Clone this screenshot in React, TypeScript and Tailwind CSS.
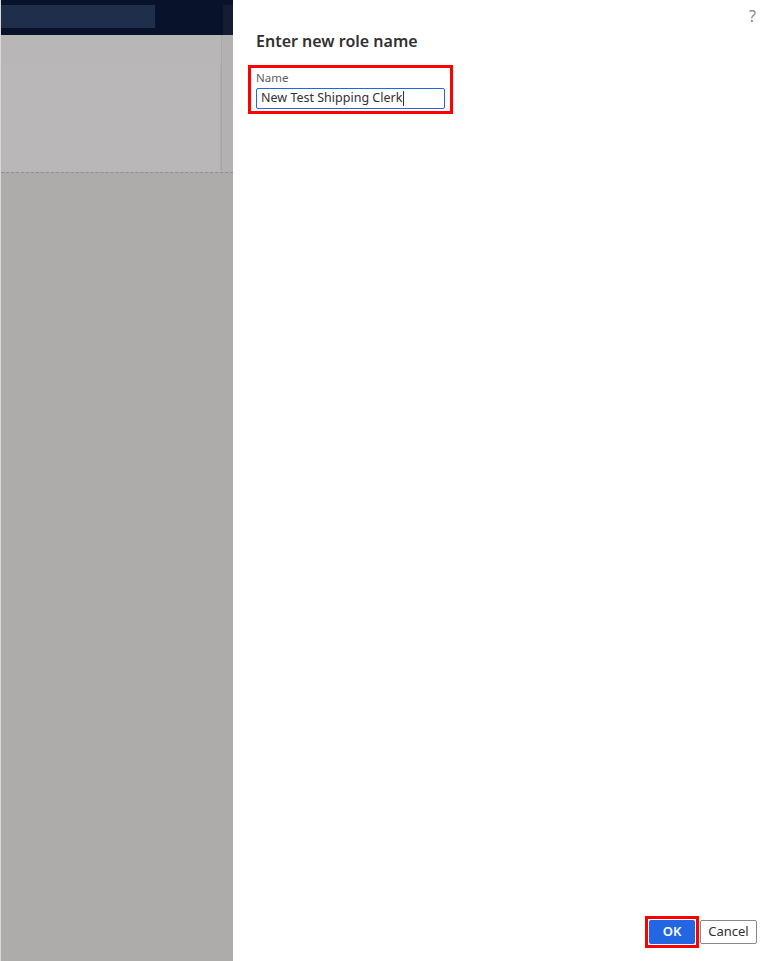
import React from 'react';

export default function App() {
  return (
    <div className="flex h-[961px] w-[768px] overflow-hidden bg-white font-['Noto_Sans',sans-serif] text-[#323130]">
      {/* dimmed page behind the dialog */}
      <aside className="flex w-[233px] shrink-0 flex-col border-l border-[#d8d8d8] bg-[#adacaa]">
        <div className="flex h-[35px] items-start bg-[#08132b] pt-[5px]">
          <div className="h-[23px] w-[154px] bg-[#1f2e4b]" />
          <div className="ml-auto h-full w-[10px] bg-[#141d31]" />
        </div>
        <div className="flex h-[137px] bg-[#b8b6b6]">
          <div className="mt-[30px] mb-[2px] flex-1 border-r border-[#aeacac] bg-[#b9b7b7]" />
          <div className="w-[12px] border-l border-[#a8a6a6] bg-[#b3b1b1]" />
        </div>
        <div className="border-t border-dashed border-[#8f8e8c]" />
        <div className="flex-1" />
      </aside>

      {/* dialog */}
      <section className="relative flex flex-1 flex-col">
        <span className="absolute right-[12px] top-[4px] text-[16px] text-[#8a8886]">?</span>
        <h1 className="mt-[29px] ml-[23px] text-[16px] font-semibold leading-[24px] text-[#323130]">
          Enter new role name
        </h1>
        <div className="mt-[12px] ml-[15px] w-[205px] border-[3px] border-[#ff0000] px-[5px] pt-[2px] pb-[2px]">
          <label className="block text-[11.5px] leading-[16px] text-[#605e5c]">Name</label>
          <div className="mt-[2px] flex h-[21px] w-[189px] items-center rounded-[2px] border border-[#2266e3] px-[4px] text-[12.5px] text-[#323130]">
            New Test Shipping Clerk
            <span className="ml-[1px] h-[15px] w-px bg-[#323130]" />
          </div>
        </div>
        <div className="flex-1" />
        <div className="mb-[13px] mr-[11px] flex items-center justify-end gap-[1px]">
          <div className="border-[3px] border-[#ff0000] p-[1px]">
            <button className="flex h-[24px] w-[46px] items-center justify-center rounded-[2px] bg-[#2266e3] text-[13px] font-semibold text-white">
              OK
            </button>
          </div>
          <button className="flex h-[24px] w-[57px] items-center justify-center rounded-[2px] border border-[#8a8886] bg-white text-[13px] text-[#323130]">
            Cancel
          </button>
        </div>
      </section>
    </div>
  );
}
